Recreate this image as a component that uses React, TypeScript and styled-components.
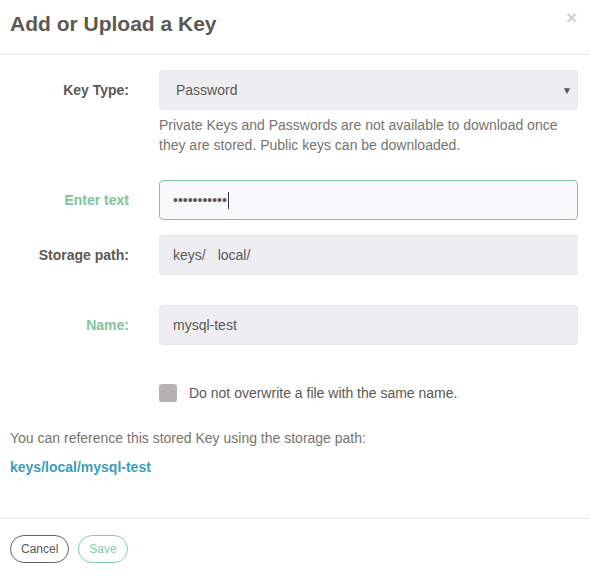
import styled, { createGlobalStyle } from 'styled-components'

const GlobalStyle = createGlobalStyle`
  html, body {
    margin: 0;
    padding: 0;
    background: #ffffff;
  }
  body {
    font-family: "Liberation Sans", Arial, sans-serif;
    color: #5c5854;
  }
  * {
    box-sizing: border-box;
  }
`

const Modal = styled.div`
  width: 589px;
  height: 576px;
  display: flex;
  flex-direction: column;
  background: #fff;
`

const Header = styled.div`
  position: relative;
  height: 55px;
  padding: 11px 10px 0;
  border-bottom: 1px solid #e5e5e5;
`

const Title = styled.h4`
  margin: 0;
  font-size: 21px;
  line-height: 26px;
  font-weight: 700;
  color: #5c5854;
`

const CloseButton = styled.button`
  position: absolute;
  top: 8px;
  right: 12px;
  border: none;
  background: none;
  padding: 0;
  font-family: "Liberation Sans", Arial, sans-serif;
  font-size: 19px;
  font-weight: 700;
  line-height: 20px;
  color: #cfcfcf;
  cursor: pointer;
`

const Body = styled.div`
  flex: 1;
  padding: 15px 11px 0 10px;
  display: flex;
  flex-direction: column;
`

const FormRow = styled.div<{ $mt?: number }>`
  display: grid;
  grid-template-columns: 119px 1fr;
  column-gap: 30px;
  align-items: center;
  margin-top: ${p => p.$mt ?? 0}px;
`

const Label = styled.label<{ $accent?: boolean }>`
  text-align: right;
  font-size: 14px;
  font-weight: 700;
  color: ${p => (p.$accent ? '#7ec59d' : '#5c5854')};
`

const Field = styled.div<{ $focused?: boolean; $cut?: boolean }>`
  position: relative;
  height: 40px;
  display: flex;
  align-items: center;
  padding: 0 16px 0 13px;
  font-size: 14px;
  color: #5c5854;
  background: ${p => (p.$focused ? '#f9f9fc' : '#eeeef2')};
  border: 1px solid ${p => (p.$focused ? '#7ec59d' : '#e8e8ec')};
  border-radius: ${p => (p.$cut ? '4px 0 0 4px' : '4px')};
  ${p => (p.$cut ? 'border-right: none;' : '')}
`

const SelectField = styled(Field)`
  padding-left: 16px;
`

const Caret = styled.span`
  position: absolute;
  right: 5px;
  top: 50%;
  transform: translateY(-50%);
  font-size: 10px;
  color: #5c5854;
`

const Dots = styled.span`
  font-size: 14px;
  letter-spacing: 0;
`

const Cursor = styled.span`
  display: inline-block;
  width: 1px;
  height: 17px;
  margin-left: 1px;
  background: #333;
`

const PathPart = styled.span`
  & + & {
    margin-left: 12px;
  }
`

const HelpText = styled.p`
  grid-column: 2;
  margin: 5px 0 0;
  font-size: 14px;
  line-height: 20px;
  color: #777370;
`

const CheckRow = styled.label`
  grid-column: 2;
  display: flex;
  align-items: center;
  gap: 12px;
  font-size: 14px;
  color: #5c5854;
`

const CheckBox = styled.span`
  width: 18px;
  height: 18px;
  border-radius: 3px;
  background: #b5b1ae;
`

const Note = styled.p`
  margin: 26px 0 0;
  font-size: 14px;
  line-height: 20px;
  color: #777370;
`

const PathLink = styled.a`
  display: block;
  margin-top: 9px;
  font-size: 14px;
  line-height: 20px;
  font-weight: 700;
  color: #3c9db8;
  text-decoration: none;
`

const Footer = styled.div`
  height: 58px;
  border-top: 1px solid #e5e5e5;
  padding: 16px 10px 0;
  display: flex;
  gap: 9px;
  align-items: flex-start;
`

const PillButton = styled.button<{ $primary?: boolean }>`
  height: 28px;
  padding: 0 10px;
  border-radius: 14px;
  background: #fff;
  font-family: "Liberation Sans", Arial, sans-serif;
  font-size: 12px;
  border: 1px solid ${p => (p.$primary ? '#86cea8' : '#66625e')};
  color: ${p => (p.$primary ? '#86cea8' : '#5c5854')};
  cursor: pointer;
`

const App = () => {
  return (
    <>
      <GlobalStyle />
      <Modal>
        <Header>
          <Title>Add or Upload a Key</Title>
          <CloseButton aria-label="close">×</CloseButton>
        </Header>
        <Body>
          <FormRow>
            <Label>Key Type:</Label>
            <SelectField>
              Password
              <Caret>▼</Caret>
            </SelectField>
            <HelpText>
              Private Keys and Passwords are not available to download once they are stored. Public keys can be downloaded.
            </HelpText>
          </FormRow>

          <FormRow $mt={25}>
            <Label $accent>Enter text</Label>
            <Field $focused>
              <Dots>•••••••••••</Dots>
              <Cursor />
            </Field>
          </FormRow>

          <FormRow $mt={15}>
            <Label>Storage path:</Label>
            <Field $cut>
              <PathPart>keys/</PathPart>
              <PathPart>local/</PathPart>
            </Field>
          </FormRow>

          <FormRow $mt={30}>
            <Label $accent>Name:</Label>
            <Field>mysql-test</Field>
          </FormRow>

          <FormRow $mt={39}>
            <CheckRow>
              <CheckBox />
              Do not overwrite a file with the same name.
            </CheckRow>
          </FormRow>

          <Note>You can reference this stored Key using the storage path:</Note>
          <PathLink>keys/local/mysql-test</PathLink>
        </Body>
        <Footer>
          <PillButton>Cancel</PillButton>
          <PillButton $primary>Save</PillButton>
        </Footer>
      </Modal>
    </>
  )
}

export default App
